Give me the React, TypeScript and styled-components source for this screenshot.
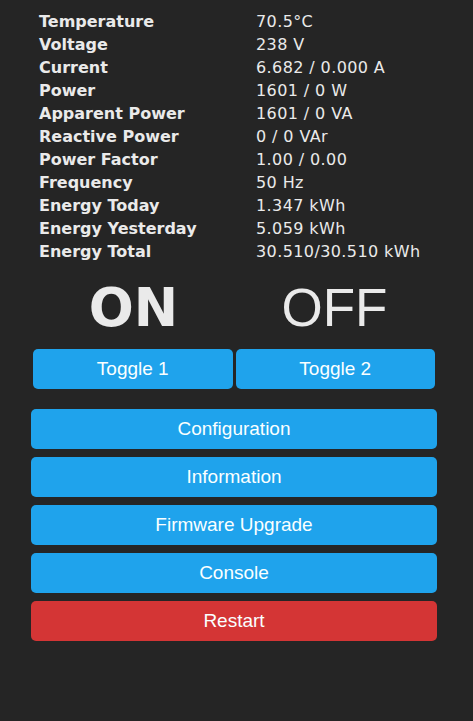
import React from 'react'
import styled, { createGlobalStyle } from 'styled-components'

const GlobalStyle = createGlobalStyle`
  html, body {
    margin: 0;
    background: #252525;
  }
  body {
    font-family: "DejaVu Sans", Verdana, sans-serif;
    color: #eaeaea;
  }
`

const Page = styled.div`
  width: 406px;
  margin-left: 31px;
  padding-top: 10px;
  height: 721px;
  box-sizing: border-box;
`

const SensorTable = styled.div`
  display: grid;
  grid-template-columns: 217px 1fr;
  padding-left: 8px;
  font-size: 16px;
  line-height: 23px;
`

const Label = styled.div`
  font-weight: bold;
  white-space: nowrap;
`

const Value = styled.div`
  white-space: nowrap;
  letter-spacing: 0.4px;
`

const StateRow = styled.div`
  display: grid;
  grid-template-columns: 1fr 1fr;
  padding: 0 2px;
  margin-top: 3px;
  height: 83px;
  align-items: center;
`

const State = styled.div<{ on: boolean }>`
  text-align: center;
  font-size: 53px;
  line-height: 83px;
  font-family: ${p => (p.on ? '"DejaVu Sans", Verdana, sans-serif' : '"Liberation Sans", Arial, sans-serif')};
  font-weight: ${p => (p.on ? 'bold' : 'normal')};
`

const ToggleRow = styled.div`
  display: grid;
  grid-template-columns: 1fr 1fr;
  gap: 3px;
  padding: 0 2px;
`

const Menu = styled.div`
  display: flex;
  flex-direction: column;
  gap: 8px;
  margin-top: 20px;
`

const Button = styled.button<{ danger?: boolean }>`
  height: 40px;
  width: 100%;
  border: 0;
  border-radius: 5px;
  background: ${p => (p.danger ? '#d43535' : '#1fa3ec')};
  color: #faffff;
  font-family: "Liberation Sans", Arial, sans-serif;
  font-size: 19px;
  line-height: 40px;
  padding: 0;
  cursor: pointer;
`

const sensors: [string, string][] = [
  ['Temperature', '70.5°C'],
  ['Voltage', '238 V'],
  ['Current', '6.682 / 0.000 A'],
  ['Power', '1601 / 0 W'],
  ['Apparent Power', '1601 / 0 VA'],
  ['Reactive Power', '0 / 0 VAr'],
  ['Power Factor', '1.00 / 0.00'],
  ['Frequency', '50 Hz'],
  ['Energy Today', '1.347 kWh'],
  ['Energy Yesterday', '5.059 kWh'],
  ['Energy Total', '30.510/30.510 kWh'],
]

const menu = ['Configuration', 'Information', 'Firmware Upgrade', 'Console']

export default function App() {
  return (
    <>
      <GlobalStyle />
      <Page>
        <SensorTable>
          {sensors.map(([label, value]) => (
            <React.Fragment key={label}>
              <Label>{label}</Label>
              <Value>{value}</Value>
            </React.Fragment>
          ))}
        </SensorTable>
        <StateRow>
          <State on>ON</State>
          <State on={false}>OFF</State>
        </StateRow>
        <ToggleRow>
          <Button>Toggle 1</Button>
          <Button>Toggle 2</Button>
        </ToggleRow>
        <Menu>
          {menu.map(item => (
            <Button key={item}>{item}</Button>
          ))}
          <Button danger>Restart</Button>
        </Menu>
      </Page>
    </>
  )
}
